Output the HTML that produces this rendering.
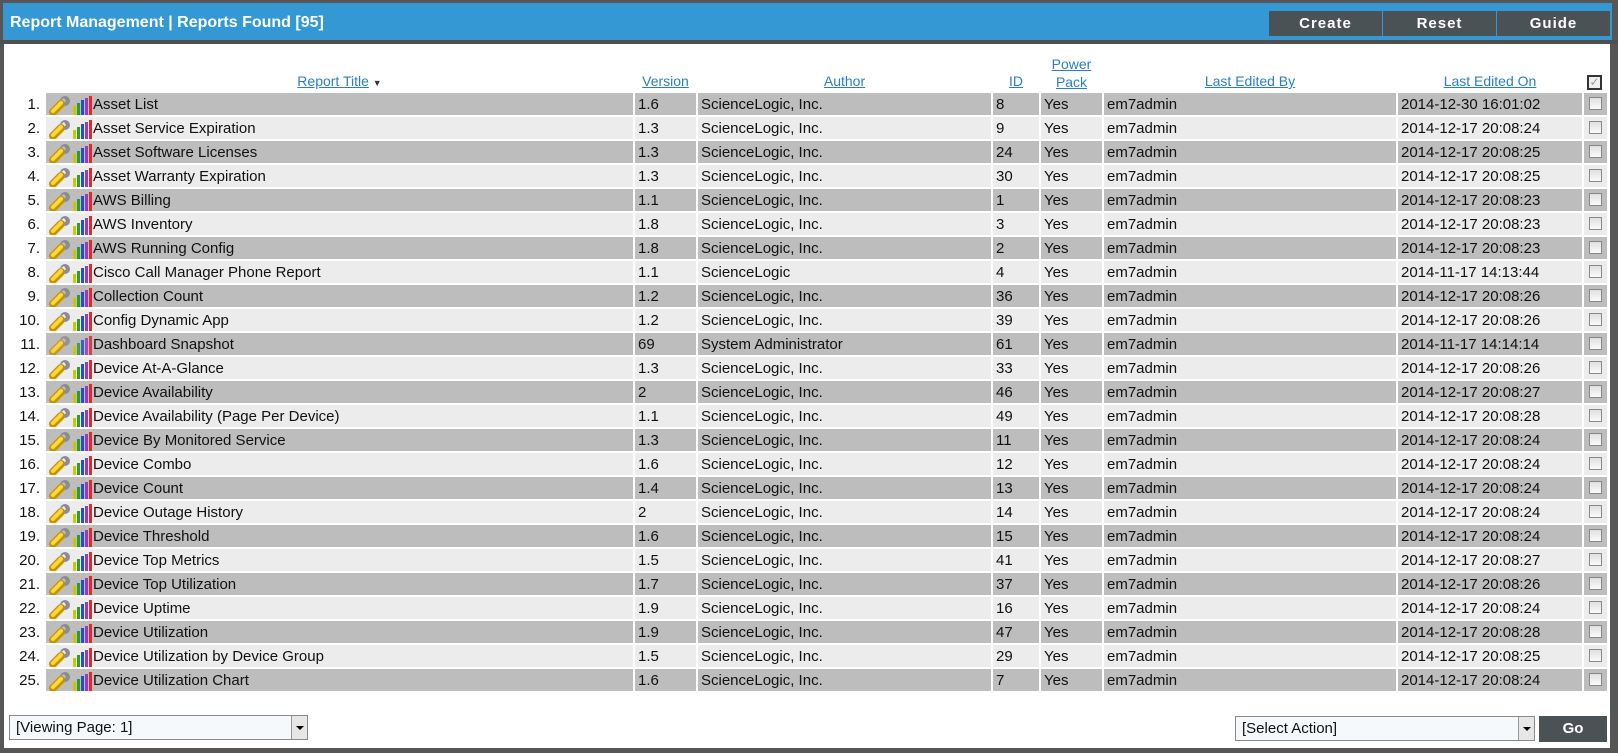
<!DOCTYPE html>
<html><head><meta charset="utf-8"><style>
*{margin:0;padding:0;box-sizing:border-box}
body{width:1618px;height:753px;background:#565656;font-family:"Liberation Sans",Arial,sans-serif;position:relative;overflow:hidden}
#content{position:absolute;left:4px;top:44px;width:1606px;height:704px;background:#fff}
#hdr{position:absolute;left:3px;top:3px;width:1609px;height:37px;background:#3498d4}
#hdr .t{position:absolute;left:7px;top:11px;color:#fff;font-weight:bold;font-size:16px}
.btn{position:absolute;top:8px;height:25px;background:#4b5255;color:#fff;font-weight:bold;font-size:15px;letter-spacing:1px;text-align:center;line-height:25px}
a{color:#2a7fc2;text-decoration:underline}
.h{position:absolute;font-size:14px;text-align:center;top:73px}
.r{position:absolute;left:0;height:22px;width:1618px;font-size:15px;color:#111}
.r div{position:absolute;top:0;height:22px;line-height:24px;padding-left:3px;white-space:nowrap;overflow:hidden}
.r .n{left:0;width:40px;text-align:right;padding:0;background:none!important}
.o div{background:#bdbdbd}.e div{background:#ececec}
.c1{left:46px;width:587px}.c2{left:635px;width:61px}.c3{left:698px;width:293px}.c4{left:993px;width:46px}.c5{left:1041px;width:61px}.c6{left:1104px;width:292px}.c7{left:1398px;width:184px}.c8{left:1584px;width:23px}
.cb{position:absolute;left:5px;top:4px;width:13px;height:13px;border:1px solid #8a8a8a;background:linear-gradient(#e0e0e0,#fafafa)}
.ic{display:inline-block;vertical-align:top;width:44px;height:22px;position:relative}
.sel{position:absolute;height:25px;border:1px solid #8a8a8a;background:#f6f9fb;font-size:15px;line-height:23px;padding-left:6px;color:#111}
.sel i{position:absolute;right:0;top:0;width:16px;height:23px;border-left:1px solid #999;background:#e6e6e6}
.sel i:after{content:"";position:absolute;left:4px;top:10px;border-left:4px solid transparent;border-right:4px solid transparent;border-top:4px solid #000}
</style></head><body>
<svg width="0" height="0" style="position:absolute"><defs>
<g id="icn"><path d="M4 19 L12 11" stroke="#c89400" stroke-width="8" stroke-linecap="round"/><path d="M4 18 L12 10" stroke="#ffd83a" stroke-width="4" stroke-linecap="round"/><path d="M11 8 a5 5 0 1 1 5 5 l-2 -2 l3 -3 l-2 -3 z" fill="#8c8c8c"/>
<rect x="24" y="13" width="3" height="9" fill="#c8c800"/><rect x="28" y="10" width="3" height="12" fill="#2aa02a"/><rect x="32" y="7" width="3" height="15" fill="#2a4ad0"/><rect x="36" y="5" width="3" height="17" fill="#9a3ac0"/><rect x="40" y="3" width="3" height="19" fill="#e02a2a"/></g>
</defs></svg>
<div id="hdr"><div class="t">Report Management | Reports Found [95]</div>
<div class="btn" style="left:1266px;width:113px">Create</div>
<div class="btn" style="left:1380px;width:113px">Reset</div>
<div class="btn" style="left:1494px;width:113px">Guide</div></div>
<div style="position:absolute;left:0;top:40px;width:1618px;height:4px;background:#4f4f4f"></div>
<div id="content"></div>
<div class="h" style="left:46px;width:587px"><a>Report Title</a> <span style="font-size:9px;color:#333">▼</span></div>
<div class="h" style="left:635px;width:61px"><a>Version</a></div>
<div class="h" style="left:698px;width:293px"><a>Author</a></div>
<div class="h" style="left:993px;width:46px"><a>ID</a></div>
<div class="h" style="left:1041px;width:61px;top:55px;line-height:18px"><a>Power</a><br><a>Pack</a></div>
<div class="h" style="left:1104px;width:292px"><a>Last Edited By</a></div>
<div class="h" style="left:1398px;width:184px"><a>Last Edited On</a></div>
<div style="position:absolute;left:1587px;top:75px;width:15px;height:15px;border:2px solid #333;background:#eee;color:#999;font-size:12px;line-height:11px;text-align:center">✓</div>

<div class="r o" style="top:93px"><div class="n">1.</div><div class="c1"><svg class="ic"><use href="#icn"/></svg>Asset List</div><div class="c2">1.6</div><div class="c3">ScienceLogic, Inc.</div><div class="c4">8</div><div class="c5">Yes</div><div class="c6">em7admin</div><div class="c7">2014-12-30 16:01:02</div><div class="c8"><span class="cb"></span></div></div>
<div class="r e" style="top:117px"><div class="n">2.</div><div class="c1"><svg class="ic"><use href="#icn"/></svg>Asset Service Expiration</div><div class="c2">1.3</div><div class="c3">ScienceLogic, Inc.</div><div class="c4">9</div><div class="c5">Yes</div><div class="c6">em7admin</div><div class="c7">2014-12-17 20:08:24</div><div class="c8"><span class="cb"></span></div></div>
<div class="r o" style="top:141px"><div class="n">3.</div><div class="c1"><svg class="ic"><use href="#icn"/></svg>Asset Software Licenses</div><div class="c2">1.3</div><div class="c3">ScienceLogic, Inc.</div><div class="c4">24</div><div class="c5">Yes</div><div class="c6">em7admin</div><div class="c7">2014-12-17 20:08:25</div><div class="c8"><span class="cb"></span></div></div>
<div class="r e" style="top:165px"><div class="n">4.</div><div class="c1"><svg class="ic"><use href="#icn"/></svg>Asset Warranty Expiration</div><div class="c2">1.3</div><div class="c3">ScienceLogic, Inc.</div><div class="c4">30</div><div class="c5">Yes</div><div class="c6">em7admin</div><div class="c7">2014-12-17 20:08:25</div><div class="c8"><span class="cb"></span></div></div>
<div class="r o" style="top:189px"><div class="n">5.</div><div class="c1"><svg class="ic"><use href="#icn"/></svg>AWS Billing</div><div class="c2">1.1</div><div class="c3">ScienceLogic, Inc.</div><div class="c4">1</div><div class="c5">Yes</div><div class="c6">em7admin</div><div class="c7">2014-12-17 20:08:23</div><div class="c8"><span class="cb"></span></div></div>
<div class="r e" style="top:213px"><div class="n">6.</div><div class="c1"><svg class="ic"><use href="#icn"/></svg>AWS Inventory</div><div class="c2">1.8</div><div class="c3">ScienceLogic, Inc.</div><div class="c4">3</div><div class="c5">Yes</div><div class="c6">em7admin</div><div class="c7">2014-12-17 20:08:23</div><div class="c8"><span class="cb"></span></div></div>
<div class="r o" style="top:237px"><div class="n">7.</div><div class="c1"><svg class="ic"><use href="#icn"/></svg>AWS Running Config</div><div class="c2">1.8</div><div class="c3">ScienceLogic, Inc.</div><div class="c4">2</div><div class="c5">Yes</div><div class="c6">em7admin</div><div class="c7">2014-12-17 20:08:23</div><div class="c8"><span class="cb"></span></div></div>
<div class="r e" style="top:261px"><div class="n">8.</div><div class="c1"><svg class="ic"><use href="#icn"/></svg>Cisco Call Manager Phone Report</div><div class="c2">1.1</div><div class="c3">ScienceLogic</div><div class="c4">4</div><div class="c5">Yes</div><div class="c6">em7admin</div><div class="c7">2014-11-17 14:13:44</div><div class="c8"><span class="cb"></span></div></div>
<div class="r o" style="top:285px"><div class="n">9.</div><div class="c1"><svg class="ic"><use href="#icn"/></svg>Collection Count</div><div class="c2">1.2</div><div class="c3">ScienceLogic, Inc.</div><div class="c4">36</div><div class="c5">Yes</div><div class="c6">em7admin</div><div class="c7">2014-12-17 20:08:26</div><div class="c8"><span class="cb"></span></div></div>
<div class="r e" style="top:309px"><div class="n">10.</div><div class="c1"><svg class="ic"><use href="#icn"/></svg>Config Dynamic App</div><div class="c2">1.2</div><div class="c3">ScienceLogic, Inc.</div><div class="c4">39</div><div class="c5">Yes</div><div class="c6">em7admin</div><div class="c7">2014-12-17 20:08:26</div><div class="c8"><span class="cb"></span></div></div>
<div class="r o" style="top:333px"><div class="n">11.</div><div class="c1"><svg class="ic" style="opacity:.85"><use href="#icn"/></svg>Dashboard Snapshot</div><div class="c2">69</div><div class="c3">System Administrator</div><div class="c4">61</div><div class="c5">Yes</div><div class="c6">em7admin</div><div class="c7">2014-11-17 14:14:14</div><div class="c8"><span class="cb"></span></div></div>
<div class="r e" style="top:357px"><div class="n">12.</div><div class="c1"><svg class="ic"><use href="#icn"/></svg>Device At-A-Glance</div><div class="c2">1.3</div><div class="c3">ScienceLogic, Inc.</div><div class="c4">33</div><div class="c5">Yes</div><div class="c6">em7admin</div><div class="c7">2014-12-17 20:08:26</div><div class="c8"><span class="cb"></span></div></div>
<div class="r o" style="top:381px"><div class="n">13.</div><div class="c1"><svg class="ic"><use href="#icn"/></svg>Device Availability</div><div class="c2">2</div><div class="c3">ScienceLogic, Inc.</div><div class="c4">46</div><div class="c5">Yes</div><div class="c6">em7admin</div><div class="c7">2014-12-17 20:08:27</div><div class="c8"><span class="cb"></span></div></div>
<div class="r e" style="top:405px"><div class="n">14.</div><div class="c1"><svg class="ic"><use href="#icn"/></svg>Device Availability (Page Per Device)</div><div class="c2">1.1</div><div class="c3">ScienceLogic, Inc.</div><div class="c4">49</div><div class="c5">Yes</div><div class="c6">em7admin</div><div class="c7">2014-12-17 20:08:28</div><div class="c8"><span class="cb"></span></div></div>
<div class="r o" style="top:429px"><div class="n">15.</div><div class="c1"><svg class="ic"><use href="#icn"/></svg>Device By Monitored Service</div><div class="c2">1.3</div><div class="c3">ScienceLogic, Inc.</div><div class="c4">11</div><div class="c5">Yes</div><div class="c6">em7admin</div><div class="c7">2014-12-17 20:08:24</div><div class="c8"><span class="cb"></span></div></div>
<div class="r e" style="top:453px"><div class="n">16.</div><div class="c1"><svg class="ic"><use href="#icn"/></svg>Device Combo</div><div class="c2">1.6</div><div class="c3">ScienceLogic, Inc.</div><div class="c4">12</div><div class="c5">Yes</div><div class="c6">em7admin</div><div class="c7">2014-12-17 20:08:24</div><div class="c8"><span class="cb"></span></div></div>
<div class="r o" style="top:477px"><div class="n">17.</div><div class="c1"><svg class="ic"><use href="#icn"/></svg>Device Count</div><div class="c2">1.4</div><div class="c3">ScienceLogic, Inc.</div><div class="c4">13</div><div class="c5">Yes</div><div class="c6">em7admin</div><div class="c7">2014-12-17 20:08:24</div><div class="c8"><span class="cb"></span></div></div>
<div class="r e" style="top:501px"><div class="n">18.</div><div class="c1"><svg class="ic"><use href="#icn"/></svg>Device Outage History</div><div class="c2">2</div><div class="c3">ScienceLogic, Inc.</div><div class="c4">14</div><div class="c5">Yes</div><div class="c6">em7admin</div><div class="c7">2014-12-17 20:08:24</div><div class="c8"><span class="cb"></span></div></div>
<div class="r o" style="top:525px"><div class="n">19.</div><div class="c1"><svg class="ic"><use href="#icn"/></svg>Device Threshold</div><div class="c2">1.6</div><div class="c3">ScienceLogic, Inc.</div><div class="c4">15</div><div class="c5">Yes</div><div class="c6">em7admin</div><div class="c7">2014-12-17 20:08:24</div><div class="c8"><span class="cb"></span></div></div>
<div class="r e" style="top:549px"><div class="n">20.</div><div class="c1"><svg class="ic"><use href="#icn"/></svg>Device Top Metrics</div><div class="c2">1.5</div><div class="c3">ScienceLogic, Inc.</div><div class="c4">41</div><div class="c5">Yes</div><div class="c6">em7admin</div><div class="c7">2014-12-17 20:08:27</div><div class="c8"><span class="cb"></span></div></div>
<div class="r o" style="top:573px"><div class="n">21.</div><div class="c1"><svg class="ic"><use href="#icn"/></svg>Device Top Utilization</div><div class="c2">1.7</div><div class="c3">ScienceLogic, Inc.</div><div class="c4">37</div><div class="c5">Yes</div><div class="c6">em7admin</div><div class="c7">2014-12-17 20:08:26</div><div class="c8"><span class="cb"></span></div></div>
<div class="r e" style="top:597px"><div class="n">22.</div><div class="c1"><svg class="ic"><use href="#icn"/></svg>Device Uptime</div><div class="c2">1.9</div><div class="c3">ScienceLogic, Inc.</div><div class="c4">16</div><div class="c5">Yes</div><div class="c6">em7admin</div><div class="c7">2014-12-17 20:08:24</div><div class="c8"><span class="cb"></span></div></div>
<div class="r o" style="top:621px"><div class="n">23.</div><div class="c1"><svg class="ic"><use href="#icn"/></svg>Device Utilization</div><div class="c2">1.9</div><div class="c3">ScienceLogic, Inc.</div><div class="c4">47</div><div class="c5">Yes</div><div class="c6">em7admin</div><div class="c7">2014-12-17 20:08:28</div><div class="c8"><span class="cb"></span></div></div>
<div class="r e" style="top:645px"><div class="n">24.</div><div class="c1"><svg class="ic"><use href="#icn"/></svg>Device Utilization by Device Group</div><div class="c2">1.5</div><div class="c3">ScienceLogic, Inc.</div><div class="c4">29</div><div class="c5">Yes</div><div class="c6">em7admin</div><div class="c7">2014-12-17 20:08:25</div><div class="c8"><span class="cb"></span></div></div>
<div class="r o" style="top:669px"><div class="n">25.</div><div class="c1"><svg class="ic"><use href="#icn"/></svg>Device Utilization Chart</div><div class="c2">1.6</div><div class="c3">ScienceLogic, Inc.</div><div class="c4">7</div><div class="c5">Yes</div><div class="c6">em7admin</div><div class="c7">2014-12-17 20:08:24</div><div class="c8"><span class="cb"></span></div></div>

<div class="sel" style="left:9px;top:715px;width:299px">[Viewing Page: 1]<i></i></div>
<div class="sel" style="left:1235px;top:716px;width:300px">[Select Action]<i></i></div>
<div class="btn" style="left:1539px;top:716px;width:68px;height:26px;line-height:26px;font-size:15px;letter-spacing:0">Go</div>
</body></html>
